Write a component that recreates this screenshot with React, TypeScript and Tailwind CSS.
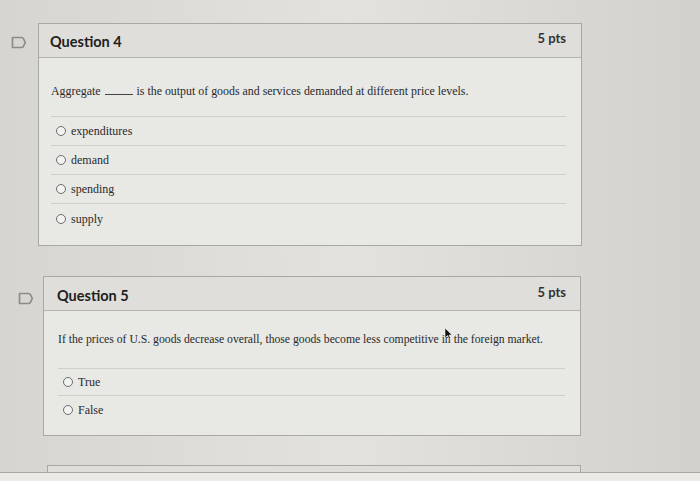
import React from "react";

interface Question {
    title: string;
    points: string;
    prompt: React.ReactNode;
    options: string[];
}

const questions: Question[] = [
    {
        title: "Question 4",
        points: "5 pts",
        prompt: (
            <>
                Aggregate <span className="inline-block w-[28px] border-b border-[#444] align-baseline mx-[1px]" />{" "}
                is the output of goods and services demanded at different price levels.
            </>
        ),
        options: ["expenditures", "demand", "spending", "supply"],
    },
    {
        title: "Question 5",
        points: "5 pts",
        prompt: "If the prices of U.S. goods decrease overall, those goods become less competitive in the foreign market.",
        options: ["True", "False"],
    },
];

function Flag() {
    return (
        <svg width="16" height="13" viewBox="0 0 16 13" fill="none">
            <path
                d="M1.5 1.5 H10.5 Q11.7 1.5 12.5 2.8 L14.3 6.5 L12.5 10.2 Q11.7 11.5 10.5 11.5 H1.5 Z"
                stroke="#8c8c89"
                strokeWidth="1.7"
                strokeLinejoin="round"
            />
        </svg>
    );
}

function Radio() {
    return <span className="inline-block w-[10px] h-[10px] rounded-full border border-[#6e6e6c] bg-[#f2f2f0] shrink-0" />;
}

export default function App() {
    const [q4, q5] = questions;

    return (
        <div
            className="relative w-[700px] h-[481px] overflow-hidden bg-linear-to-r from-[#d6d5d1] via-[#e3e2df] to-[#d2d1cd] text-[#2a2a2a]"
            style={{ fontFamily: "Lato, 'Open Sans', sans-serif" }}
        >
            <div className="pt-[23px]">
                {/* question 4 */}
                <div className="flex items-start">
                    <div className="w-[38px] pt-[13px] pl-[11px]">
                        <Flag />
                    </div>
                    <div className="w-[544px] border border-[#a9a8a4] bg-[#e8e8e5]">
                        <div className="h-[34px] flex items-center justify-between pl-[11px] pr-[15px] bg-[#dfdeda] border-b border-[#b3b2ae]">
                            <span className="text-[14.5px] font-bold text-[#1f1f1f] pt-[3px]">{q4.title}</span>
                            <span className="text-[13px] font-bold text-[#333] pb-[3px]">{q4.points}</span>
                        </div>
                        <div className="pl-[12px] pr-[15px] pt-[25px] pb-[12px]" style={{ fontFamily: "'Liberation Serif', serif" }}>
                            <div className="text-[11.9px] h-[34px] border-b border-[#cfcecb] leading-[16px]">{q4.prompt}</div>
                            {q4.options.map((o, i) => (
                                <div
                                    key={o}
                                    className={
                                        "h-[29px] flex items-center gap-[5px] pl-[5px] text-[12px] " +
                                        (i < q4.options.length - 1 ? "border-b border-[#cfcecb]" : "")
                                    }
                                >
                                    <Radio />
                                    <span>{o}</span>
                                </div>
                            ))}
                        </div>
                    </div>
                </div>

                {/* question 5 */}
                <div className="flex items-start mt-[30px]">
                    <div className="w-[43px] pt-[16px] pl-[18px]">
                        <Flag />
                    </div>
                    <div className="w-[538px] border border-[#a9a8a4] bg-[#e8e8e5]">
                        <div className="h-[34px] flex items-center justify-between pl-[13px] pr-[14px] bg-[#dfdeda] border-b border-[#b3b2ae]">
                            <span className="text-[14.5px] font-bold text-[#1f1f1f] pt-[5px]">{q5.title}</span>
                            <span className="text-[13px] font-bold text-[#333] pb-[1px]">{q5.points}</span>
                        </div>
                        <div className="pl-[14px] pr-[15px] pt-[21px] pb-[12px]" style={{ fontFamily: "'Liberation Serif', serif" }}>
                            <div className="text-[11.7px] h-[37px] border-b border-[#cfcecb] leading-[16px] whitespace-nowrap">{q5.prompt}</div>
                            {q5.options.map((o, i) => (
                                <div
                                    key={o}
                                    className={
                                        "h-[27px] flex items-center gap-[5px] pl-[5px] text-[12px] " +
                                        (i < q5.options.length - 1 ? "border-b border-[#cfcecb]" : "")
                                    }
                                >
                                    <Radio />
                                    <span>{o}</span>
                                </div>
                            ))}
                        </div>
                    </div>
                </div>

                {/* next question, cut off */}
                <div className="ml-[47px] mt-[29px] w-[534px] h-[20px] border border-[#a9a8a4] bg-[#dfdeda]" />
            </div>

            {/* screen edge */}
            <div className="absolute left-0 right-0 bottom-0 h-[9px] bg-[#ebeae7] border-t border-[#a8a7a3]" />

            {/* mouse pointer */}
            <svg className="absolute left-[444px] top-[327px]" width="9" height="13" viewBox="0 0 9 13">
                <path d="M1 1 L1 11 L3.5 8.5 L5.2 12 L6.6 11.3 L5 8 L8 8 Z" fill="#111" stroke="#eee" strokeWidth="0.6" />
            </svg>
        </div>
    );
}
